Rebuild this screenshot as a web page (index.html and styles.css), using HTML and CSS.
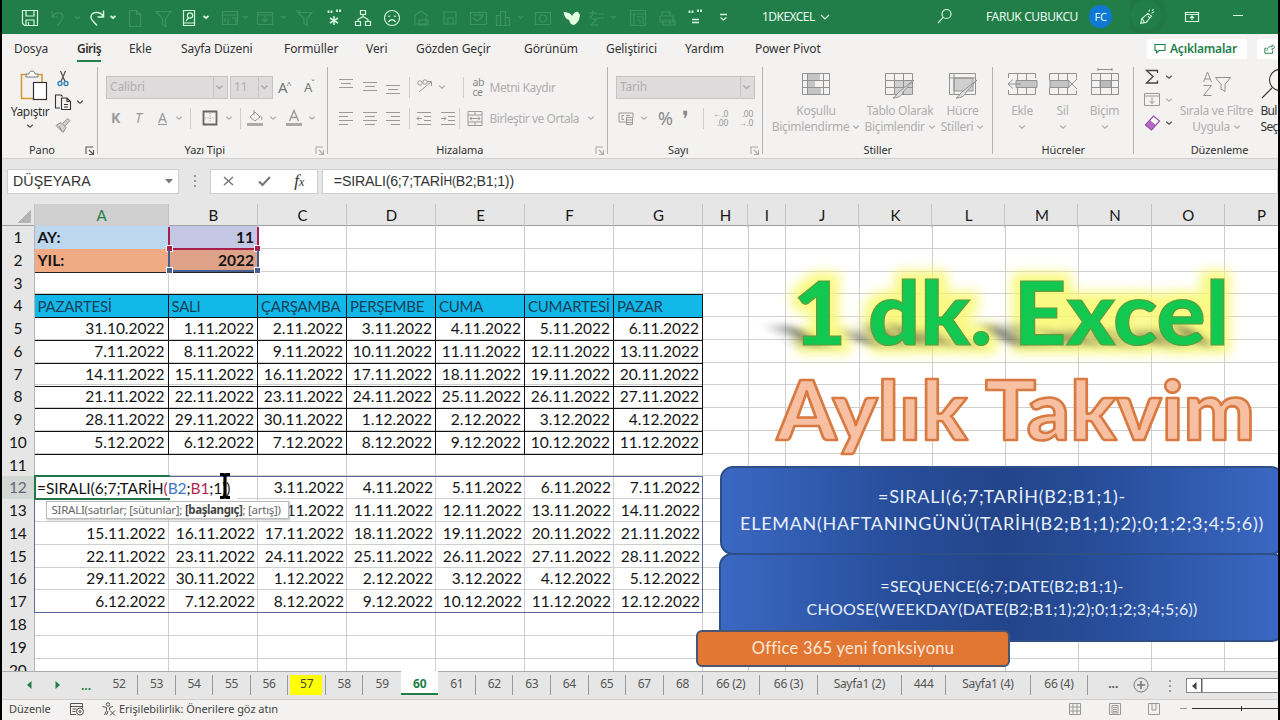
FILE: index.html
```html
<!DOCTYPE html>
<html lang="tr">
<head>
<meta charset="utf-8">
<title>1DKEXCEL</title>
<link rel="stylesheet" href="styles.css">
</head>
<body>
<svg class="defs" width="0" height="0">
  <defs>
    <symbol id="chev" viewBox="0 0 8 8"><path d="M1.2 2.8l2.8 2.4 2.8-2.4" fill="none" stroke="currentColor" stroke-width="1.4"/></symbol>
    <symbol id="launch" viewBox="0 0 10 10"><path d="M1 8V1h7M4 4l4 4M8.500 4v4.500H4" fill="none" stroke="currentColor" stroke-width="1.100"/></symbol>
  </defs>
</svg>
<div class="app">
  <header class="titlebar">
    <div class="qat">
      <svg viewBox="0 0 20 20"><path d="M2.500 2.500h15v15H4.500l-2-2zM6 2.500v5.500h8V2.500M6 17v-5h8v5M8.500 17v-3"/></svg>
      <svg class="dim" viewBox="0 0 20 20"><path d="M4 3v6h6M4 9c4-6 11-5 11 0 0 3-3 5-6 9M27 8.500l2.500 2 2.500-2"/></svg>
      <svg viewBox="0 0 20 20"><path d="M16.500 2.500V9h-6M16.500 9C13 2 3.500 4 4 9.500 4.200 12 7 14 10 17.500" stroke-width="1.500"/><path d="M23.500 8l2.500 2 2.500-2" stroke-width="1.800"/></svg>
      <svg class="dim" viewBox="0 0 20 20"><path d="M4.500 2.500h7l4 4v12h-11zM11.500 2.500v4h4"/></svg>
      <svg class="dim" viewBox="0 0 20 20"><path d="M3 3.500h15l-5.500 7v8l-3-2v-6z"/></svg>
      <svg viewBox="0 0 20 20"><path d="M4.500 2.500h11v15h-11zM4.500 15h11M7 13l2.500-3"/><circle cx="11" cy="7.500" r="2.600"/><path d="M24.500 8l2.500 2 2.500-2" stroke-width="1.800"/></svg>
      <svg class="dim" viewBox="0 0 20 20"><path d="M2.500 3.500h15v13h-15zM2.500 7h15M5 10v4M8 10v6M12 10h4v6M23 8l2.500 2L28 8"/></svg>
      <svg class="dim" viewBox="0 0 20 20"><path d="M2.500 4.500h15v12h-15zM2.500 7h15M10 8v6M7 11l3 3 3-3M26 8l2.500 2L31 8"/></svg>
      <svg class="dim" viewBox="0 0 20 20"><path d="M3 4.500h14l-5 6v7l-3-2v-5zM1 3h5"/></svg>
      <svg viewBox="0 0 20 20"><path d="M10 8v9M6 10l8 5M14 10l-8 5" stroke-width="1.500"/><path d="M4.500 2.500v2.500M7.500 2.500v2.500M13 1.500v2.500M16 1.500v2.500" stroke-width="1.800"/></svg>
      <svg viewBox="0 0 20 20"><path d="M7.500 2.500h5v4h-5zM2.500 13.500h5v4h-5zM12.500 13.500h5v4h-5zM10 6.500v3M5 13v-1.500l5-3 5 3V13"/></svg>
      <svg viewBox="0 0 20 20"><circle cx="10" cy="10" r="7.500"/><path d="M6.500 14c1.500-3 5.500-3 7 0M7 7.500v1.500M13 7.500v1.500" stroke-width="1.500"/></svg>
      <svg class="dim" viewBox="0 0 20 20"><path d="M3 8l7-5 7 5M4 8v8h11V9M8 12h9v5H8z"/></svg>
      <svg class="dim" viewBox="0 0 20 20"><path d="M3 4h14v12h-4M5 4v12h4M9 10h5v6H9z"/></svg>
      <svg class="dim" viewBox="0 0 20 20"><path d="M2.500 4.500h16v12h-16zM5 7h11M5 10l4 3 6-5"/></svg>
      <svg class="dim" viewBox="0 0 20 20"><path d="M3.500 7.500h4v10h-4zM7.500 3.500h5v14h-5zM12.500 9.500h4v8h-4zM25 8l2.500 2L30 8"/></svg>
      <svg class="dim" viewBox="0 0 20 20"><path d="M2.500 4.500h15v12h-15z"/><circle cx="10" cy="10.500" r="3.500"/></svg>
      <svg class="bird" viewBox="0 0 20 20"><path d="M1.500 4c4 0 7 1 8.500 4 1.500-3 4-5 6-4l2 3-1 5c-2 3-4 5-6 5-3-1-3-3-4-5-3-1-5-4-5.500-8z"/></svg>
      <svg class="dim" viewBox="0 0 20 20"><path d="M2 5h8M6 2v3c0 3-2 4-4 5M4 11h6l-6 6h7M11 6h6M11 10h6M24 8l2.500 2L29 8"/></svg>
      <svg class="dim" viewBox="0 0 20 20"><path d="M2.500 2.500h15v15h-15zM2.500 6h15M6 6v11M9 9h6v7M9 12h3v4"/></svg>
      <svg class="dim" viewBox="0 0 20 20"><path d="M5 7V4h8v3M3 8h13v6H3zM6 12h7v5H6zM14 12h4v5h-6"/></svg>
      <svg viewBox="0 0 20 20"><path d="M4.500 2.500v2.500M7.500 2.500v2.500M13 1.500v2.500M16 1.500v2.500" stroke-width="1.800"/><path d="M7 11.500h7M7 14.500h7" stroke-width="1.300"/></svg>
      <svg viewBox="0 0 20 20"><path d="M7 6.500h7M7.500 9.500l3 2.500 3-2.500" stroke-width="1.300"/></svg>
    </div>
    <div class="doc">1DKEXCEL <svg viewBox="0 0 10 8"><path d="M1 2l4 4 4-4"/></svg></div>
    <svg class="find" viewBox="0 0 16 18"><circle cx="9.500" cy="6" r="4.500"/><path d="M6.200 9.300L1 15"/></svg>
    <div class="user">FARUK CUBUKCU</div>
    <div class="avatar">FC</div>
    <div class="pen-wrap"><svg class="pen" viewBox="0 0 20 20"><path d="M3 17l1-5 7-6 4 3-6 7zM5 12l2 4M12 4l1-2M15 6l3-2M11 9l2 2M16 3l1-2"/></svg></div>
    <svg class="ribbon-toggle" viewBox="0 0 14 12"><path d="M.5 1.500h13v9H.5zM.5 3.500h13M7 9V5.500M5 7l2-2 2 2"/></svg>
    <div class="minimise"></div>
  </header>

  <nav class="menu">
    <span>Dosya</span><span class="on">Giriş</span><span>Ekle</span><span>Sayfa Düzeni</span><span>Formüller</span><span>Veri</span><span>Gözden Geçir</span><span>Görünüm</span><span>Geliştirici</span><span>Yardım</span><span>Power Pivot</span>
    <div class="comments"><svg viewBox="0 0 12 12"><path d="M1 1.500h10v6H5L2.500 10V7.500H1z"/></svg>Açıklamalar</div>
    <div class="share"><svg viewBox="0 0 14 12"><path d="M3 5H1v6h9V8M3.500 8c0-4 3-5 6-5V1l3 3-3 3V5"/></svg></div>
  </nav>

  <section class="ribbon">
    <div class="group g-clip">
      <div class="tools">
        <div class="paste">
          <svg class="ic-paste" viewBox="0 0 28 31"><path d="M6 4.500H1.500v24H13" stroke="#d79a32" stroke-width="1.600" fill="none"/><path d="M18 4.500h4V12" stroke="#d79a32" stroke-width="1.600" fill="none"/><path d="M6 7V4h3c0-4 6-4 6 0h3v3z" fill="#fff" stroke="#777"/><rect x="13.500" y="12.500" width="13" height="17" fill="#fff" stroke="#333" stroke-width="1.200"/></svg>
          <span>Yapıştır</span>
          <svg class="chev"><use href="#chev"/></svg>
        </div>
        <div class="clip-col">
          <svg class="ic" viewBox="0 0 16 18"><path d="M5.500 1l4.500 10.500M10.500 1L6 11.500" stroke="#555" stroke-width="1.300" fill="none"/><circle cx="5" cy="13.500" r="2" fill="none" stroke="#3a84b4" stroke-width="1.400"/><circle cx="11" cy="13.500" r="2" fill="none" stroke="#3a84b4" stroke-width="1.400"/></svg>
          <div class="row"><svg class="ic" viewBox="0 0 16 18"><path d="M5 15H.5V2H6l1.500 1.500M6.500 5h5.500l3.500 3.500v8h-9zM12 5v3.500h3.500M9 11.500h4M9 14h4" fill="none" stroke="#333" stroke-width="1.100"/></svg><svg class="chev"><use href="#chev"/></svg></div>
          <svg class="ic" viewBox="0 0 16 18"><path d="M1 9.500l5-3 5 5-3 5zM7.500 7.500L13 2.500l2 2-5 5.500M4 10l3 5" fill="#d4d2d0" stroke="#8f8f8f"/></svg>
        </div>
      </div>
      <div class="glabel"><span>Pano</span><svg><use href="#launch"/></svg></div>
    </div>

    <div class="group g-font off">
      <div class="tools stack">
        <div class="strip font1">
          <div class="combo">Calibri<svg class="chev"><use href="#chev"/></svg></div>
          <div class="combo">11<svg class="chev"><use href="#chev"/></svg></div>
          <span class="big">A<sup>^</sup></span><span class="big small">A<sup>ˇ</sup></span>
        </div>
        <div class="strip font2">
          <b class="ltr">K</b><i class="ltr">T</i><u class="ltr">A</u><svg class="chev"><use href="#chev"/></svg>
          <span class="sep"></span>
          <svg class="ic20" viewBox="0 0 20 20"><path d="M3.500 3.500h13v13h-13z" stroke="#666" stroke-width="1.800"/><path d="M10 5v10M5 10h10" stroke-dasharray="1 1.500"/></svg><svg class="chev"><use href="#chev"/></svg>
          <span class="sep"></span>
          <svg class="ic20" viewBox="0 0 20 20"><path d="M5 9l5-5 5 5-5 4zM9 2v5M15 8c3 1 2 4 1 4"/><path d="M2 16.500h16" stroke="#aaa" stroke-width="3"/></svg><svg class="chev"><use href="#chev"/></svg>
          <svg class="ic20" viewBox="0 0 20 20"><path d="M5.500 13L10 2.500 14.500 13M7 9.500h6" stroke-width="1.400"/><path d="M2 16.500h16" stroke="#aaa" stroke-width="3"/></svg><svg class="chev"><use href="#chev"/></svg>
        </div>
      </div>
      <div class="glabel"><span>Yazı Tipi</span><svg><use href="#launch"/></svg></div>
    </div>

    <div class="group g-align off">
      <div class="tools stack">
        <div class="strip al1">
          <svg class="ic20" viewBox="0 0 20 20"><path d="M3 2.500h14M5 6.500h10M3 10.500h14"/></svg>
          <svg class="ic20" viewBox="0 0 20 20"><path d="M3 5.500h14M5 9.500h10M3 13.500h14"/></svg>
          <svg class="ic20" viewBox="0 0 20 20"><path d="M3 8.500h14M5 12.500h10M3 16.500h14"/></svg>
          <span class="sep"></span>
          <svg class="ic20" viewBox="0 0 20 20"><path d="M3 15L15 5M11 4.500h4.500V9"/><circle cx="4" cy="6" r="2.200"/><circle cx="9" cy="5" r="2.200"/></svg><svg class="chev"><use href="#chev"/></svg>
          <span class="sep"></span>
          <span class="abc">ab<br>ce</span>
          <span class="lbl">Metni Kaydır</span>
        </div>
        <div class="strip al2">
          <svg class="ic20" viewBox="0 0 20 20"><path d="M3 4.500h14M3 8.500h9M3 12.500h14M3 16.500h9"/></svg>
          <svg class="ic20" viewBox="0 0 20 20"><path d="M3 4.500h14M5 8.500h10M3 12.500h14M5 16.500h10"/></svg>
          <svg class="ic20" viewBox="0 0 20 20"><path d="M3 4.500h14M8 8.500h9M3 12.500h14M8 16.500h9"/></svg>
          <span class="sep"></span>
          <svg class="ic20" viewBox="0 0 20 20"><path d="M3 4.500h14M10 8.500h7M10 12.500h7M3 16.500h14M8 10.500H3M5 8.500l-2 2 2 2"/></svg>
          <svg class="ic20" viewBox="0 0 20 20"><path d="M3 4.500h14M10 8.500h7M10 12.500h7M3 16.500h14M3 10.500h5M6 8.500l2 2-2 2"/></svg>
          <span class="sep"></span>
          <svg class="ic20" viewBox="0 0 20 20"><path d="M2 3.500h14v14H2zM2 7h14M2 14h14M9 3.500V7M9 14v3.500M4 10.500h10M6 8.500l-2 2 2 2M12 8.500l2 2-2 2"/></svg>
          <span class="lbl">Birleştir ve Ortala</span><svg class="chev"><use href="#chev"/></svg>
        </div>
      </div>
      <div class="glabel"><span>Hizalama</span><svg><use href="#launch"/></svg></div>
    </div>

    <div class="group g-num off">
      <div class="tools stack">
        <div class="strip num1"><div class="combo">Tarih<svg class="chev"><use href="#chev"/></svg></div></div>
        <div class="strip num2">
          <svg class="ic20" viewBox="0 0 20 20"><path d="M2 5h14v4M2 5v9h7M7 7.500H5v4h2M9 7.500h4M9.500 9.500h6v7h-6zM9.500 12h6M9.500 14.500h6"/></svg><svg class="chev"><use href="#chev"/></svg>
          <span class="pct">%</span><span class="comma">❜</span><span class="sep"></span>
          <span class="dec">←.0<br>.00</span><span class="dec">.00<br>→.0</span>
        </div>
      </div>
      <div class="glabel"><span>Sayı</span><svg><use href="#launch"/></svg></div>
    </div>

    <div class="group g-style off">
      <div class="tools bigs">
        <div class="bigbtn w1"><svg viewBox="0 0 30 28"><path d="M6 3.500h13v7H6zM6 10.500h8v7H6zM6 17.500h14v7H6z" fill="#c4c4c4" stroke="none"/><path d="M1.500 3.500h27v21h-27zM1.500 10.500h27M1.500 17.500h27M6.500 3.500v21M22.500 3.500v21"/></svg><span>Koşullu</span><span>Biçimlendirme <svg class="chev"><use href="#chev"/></svg></span></div>
        <div class="bigbtn w2"><svg viewBox="0 0 30 28"><path d="M10 10h17v14H10z" fill="#cfcfcf" stroke="none"/><path d="M.5 3.500h27v21H.5zM.5 10.500h27M.5 17.500h27M9.500 3.500v21M18.500 3.500v21"/><path d="M29 10L18 22c-1 4-5 6-10 6 3-1 4-5 7-7z" fill="#ddd"/></svg><span>Tablo Olarak</span><span>Biçimlendir <svg class="chev"><use href="#chev"/></svg></span></div>
        <div class="bigbtn w3"><svg viewBox="0 0 30 28"><path d="M6 8h19v13H6z" fill="#cfcfcf"/><path d="M1.500 3.500h26v21h-26zM1.500 8h26M6 3.500v21"/><path d="M29 10L18 22c-1 4-5 6-10 6 3-1 4-5 7-7z" fill="#ddd"/></svg><span>Hücre</span><span>Stilleri <svg class="chev"><use href="#chev"/></svg></span></div>
      </div>
      <div class="glabel"><span>Stiller</span></div>
    </div>

    <div class="group g-cells off">
      <div class="tools bigs">
        <div class="bigbtn w4"><svg viewBox="0 0 30 28"><path d="M9 10.500h21v7H9z" fill="#c4c4c4"/><path d="M1.500 8V3.500h27V8M1.500 20v4.500h27V18M10.500 3.500v7M19.500 3.500v7M10.500 17.500v7M19.500 17.500v7M14 14H1M6 9.500L1 14l5 4.500"/></svg><span>Ekle</span><svg class="chev"><use href="#chev"/></svg></div>
        <div class="bigbtn w5"><svg viewBox="0 0 30 28"><path d="M2 10.500h19v7H2z" fill="#c4c4c4"/><path d="M1.500 10.500v-7h27v5M1.500 17.500v7h27v-4M10.500 3.500v7M19.500 3.500v7M10.500 17.500v7M19.500 17.500v7M19 9l10 10M29 9L19 19"/></svg><span>Sil</span><svg class="chev"><use href="#chev"/></svg></div>
        <div class="bigbtn w6"><svg viewBox="0 0 30 28"><path d="M10 10.500h11v7H10z" fill="#bbb"/><path d="M1.500 3.500h27v21h-27zM1.500 10.500h27M1.500 17.500h27M10.500 3.500v21M21.500 3.500v21M8 -.5h14M8 -2v3M22 -2v3"/></svg><span>Biçim</span><svg class="chev"><use href="#chev"/></svg></div>
      </div>
      <div class="glabel"><span>Hücreler</span></div>
    </div>

    <div class="group g-edit">
      <div class="tools">
        <div class="edit-col">
          <div class="row"><svg class="ic" viewBox="0 0 16 18"><path d="M13.500 5V2.500h-11L9 8.500l-6.500 6.500h11V12.500" fill="none" stroke="#444" stroke-width="1.300"/></svg><svg class="chev"><use href="#chev"/></svg></div>
          <div class="row off"><svg class="ic" viewBox="0 0 16 18"><path d="M.5 2.500h15v12H.5zM.5 5h15M8 6.500v6M5.500 10L8 12.500 10.500 10"/></svg><svg class="chev"><use href="#chev"/></svg></div>
          <div class="row"><svg class="ic" viewBox="0 0 16 18"><path d="M1.500 11l8-9 6 5-8 9z" fill="#fff" stroke="#9a4fae" stroke-width="1.200"/><path d="M1.500 11l4-4.500 6 5-4 4.500z" fill="#b36bc5" stroke="#9a4fae"/></svg><svg class="chev"><use href="#chev"/></svg></div>
        </div>
        <div class="bigbtn w7 off"><svg viewBox="0 0 30 28"><path d="M1.500 12L5.500 2l4 10M3 9h5M1.500 15.500h8l-8 10h8M13.500 7.500h15l-5.500 7v7l-4-2.500v-4.500z"/></svg><span>Sırala ve Filtre</span><span>Uygula <svg class="chev"><use href="#chev"/></svg></span></div>
        <div class="bigbtn w8"><svg viewBox="0 0 30 28"><circle cx="19" cy="10" r="10.500"/><path d="M11 18L1 28"/></svg><span>Bul</span><span>Seç</span></div>
      </div>
      <div class="glabel"><span>Düzenleme</span></div>
    </div>
  </section>

  <section class="formula">
    <div class="namebox">DÜŞEYARA<svg viewBox="0 0 8 5"><path d="M0 0h8L4 4.500z" fill="#777"/></svg></div>
    <div class="dots"><i></i><i></i><i></i></div>
    <div class="fbtns">
      <svg viewBox="0 0 14 14"><path d="M2 3l9 8M11 3l-9 8" stroke-width="1.500"/></svg>
      <svg viewBox="0 0 14 14"><path d="M1 7.500l3.500 3.500L12 3" stroke-width="2.200"/></svg>
      <span>f<small>x</small></span>
    </div>
    <div class="fbox">=SIRALI(6;7;TARİ<small>H(</small>B2;B1;1))</div>
  </section>

  <main class="sheet">
    <div class="r head"><span class="corner"></span><span class="sel">A</span><span>B</span><span>C</span><span>D</span><span>E</span><span>F</span><span>G</span><span>H</span><span>I</span><span>J</span><span>K</span><span>L</span><span>M</span><span>N</span><span>O</span><span>P</span></div>
    <div class="grid">
      <div class="r"><em>1</em><b class="ay">AY:</b><b class="v1">11</b></div>
      <div class="r"><em>2</em><b class="yil">YIL:</b><b class="v2">2022</b></div>
      <div class="r"><em>3</em></div>
      <div class="r days"><em>4</em><span>PAZARTESİ</span><span>SALI</span><span>ÇARŞAMBA</span><span>PERŞEMBE</span><span>CUMA</span><span>CUMARTESİ</span><span>PAZAR</span></div>
      <div class="r cal"><em>5</em><span>31.10.2022</span><span>1.11.2022</span><span>2.11.2022</span><span>3.11.2022</span><span>4.11.2022</span><span>5.11.2022</span><span>6.11.2022</span></div>
      <div class="r cal"><em>6</em><span>7.11.2022</span><span>8.11.2022</span><span>9.11.2022</span><span>10.11.2022</span><span>11.11.2022</span><span>12.11.2022</span><span>13.11.2022</span></div>
      <div class="r cal"><em>7</em><span>14.11.2022</span><span>15.11.2022</span><span>16.11.2022</span><span>17.11.2022</span><span>18.11.2022</span><span>19.11.2022</span><span>20.11.2022</span></div>
      <div class="r cal"><em>8</em><span>21.11.2022</span><span>22.11.2022</span><span>23.11.2022</span><span>24.11.2022</span><span>25.11.2022</span><span>26.11.2022</span><span>27.11.2022</span></div>
      <div class="r cal"><em>9</em><span>28.11.2022</span><span>29.11.2022</span><span>30.11.2022</span><span>1.12.2022</span><span>2.12.2022</span><span>3.12.2022</span><span>4.12.2022</span></div>
      <div class="r cal"><em>10</em><span>5.12.2022</span><span>6.12.2022</span><span>7.12.2022</span><span>8.12.2022</span><span>9.12.2022</span><span>10.12.2022</span><span>11.12.2022</span></div>
      <div class="r"><em>11</em></div>
      <div class="r"><em class="cur">12</em><span></span><span></span><span>3.11.2022</span><span>4.11.2022</span><span>5.11.2022</span><span>6.11.2022</span><span>7.11.2022</span></div>
      <div class="r"><em>13</em><span></span><span></span><span>10.11.2022</span><span>11.11.2022</span><span>12.11.2022</span><span>13.11.2022</span><span>14.11.2022</span></div>
      <div class="r"><em>14</em><span>15.11.2022</span><span>16.11.2022</span><span>17.11.2022</span><span>18.11.2022</span><span>19.11.2022</span><span>20.11.2022</span><span>21.11.2022</span></div>
      <div class="r"><em>15</em><span>22.11.2022</span><span>23.11.2022</span><span>24.11.2022</span><span>25.11.2022</span><span>26.11.2022</span><span>27.11.2022</span><span>28.11.2022</span></div>
      <div class="r"><em>16</em><span>29.11.2022</span><span>30.11.2022</span><span>1.12.2022</span><span>2.12.2022</span><span>3.12.2022</span><span>4.12.2022</span><span>5.12.2022</span></div>
      <div class="r"><em>17</em><span>6.12.2022</span><span>7.12.2022</span><span>8.12.2022</span><span>9.12.2022</span><span>10.12.2022</span><span>11.12.2022</span><span>12.12.2022</span></div>
      <div class="r"><em>18</em></div>
      <div class="r"><em>19</em></div>
      <div class="r"><em>20</em></div>
    </div>

    <div class="ref red"><i></i><i></i></div>
    <div class="ref blue"><i></i><i></i></div>
    <div class="spill"></div>
    <div class="edittext">=SIRALI(6;7;TARİH<span class="pr">(</span><span class="pb">B2</span>;<span class="pr">B1</span>;1))</div>
    <div class="editcell"></div>
    <div class="hint">SIRALI(satırlar; [sütunlar]; <b>[başlangıç]</b>; [artış])</div>
    <svg class="ibeam" viewBox="0 0 12 28"><path d="M1 2.500h3.500L6 4l1.500-1.500H11M6 4v20M1 25.500h3.500L6 24l1.500 1.500H11" fill="none" stroke="#000" stroke-width="3.200"/></svg>

    <svg class="art" viewBox="0 0 520 190">
      <defs>
        <filter id="glow" x="-10%" y="-30%" width="120%" height="160%"><feMorphology operator="dilate" radius="8"/><feGaussianBlur stdDeviation="6"/></filter>
        <filter id="shade" x="-10%" y="-60%" width="120%" height="220%"><feGaussianBlur stdDeviation="7 14"/></filter>
      </defs>
      <text class="w-one glow" x="35" y="80" textLength="432" lengthAdjust="spacingAndGlyphs" filter="url(#glow)" aria-hidden="true">1 dk. Excel</text>
      <text class="w-one shade" x="35" y="84" textLength="432" lengthAdjust="spacingAndGlyphs" transform="translate(-42 55) skewX(50) scale(1 .3)" filter="url(#shade)" aria-hidden="true">1 dk. Excel</text>
      <text class="w-one" x="33" y="80" textLength="436" lengthAdjust="spacingAndGlyphs">1 dk. Excel</text>
      <text class="w-two" x="17" y="175" textLength="478" lengthAdjust="spacingAndGlyphs">Aylık Takvim</text>
    </svg>
    <div class="callout c1"><span>=SIRALI(6;7;TARİH(B2;B1;1)-</span><span>ELEMAN(HAFTANINGÜNÜ(TARİH(B2;B1;1);2);0;1;2;3;4;5;6))</span></div>
    <div class="callout c2"><span>=SEQUENCE(6;7;DATE(B2;B1;1)-</span><span>CHOOSE(WEEKDAY(DATE(B2;B1;1);2);0;1;2;3;4;5;6))</span></div>
    <div class="callout c3"><span>Office 365 yeni fonksiyonu</span></div>
  </main>

  <footer class="tabs">
    <div class="nav"><svg viewBox="0 0 5 8"><path d="M4.500 0v8L0 4z"/></svg><svg viewBox="0 0 5 8"><path d="M.5 0v8L5 4z"/></svg><b>...</b></div>
    <span>52</span><span>53</span><span>54</span><span>55</span><span>56</span><span class="yel">57</span><span>58</span><span class="last">59</span><span class="act">60</span><span>61</span><span>62</span><span>63</span><span>64</span><span>65</span><span>67</span><span class="t68">68</span><span class="t2">66 (2)</span><span class="t2">66 (3)</span><span class="t3">Sayfa1 (2)</span><span class="t4">444</span><span class="t3">Sayfa1 (4)</span><span class="t2">66 (4)</span>
    <b class="more">...</b>
    <svg class="plus" viewBox="0 0 16 16"><circle cx="8" cy="8" r="7"/><path d="M8 4v8M4 8h8" stroke-width="1.600"/></svg>
    <div class="dots tdots"><i></i><i></i><i></i></div>
    <div class="scroll"><svg viewBox="0 0 5 8"><path d="M4.500 0v8L0 4z"/></svg></div>
  </footer>
  <footer class="status">
    <span class="mode">Düzenle</span>
    <svg class="macro" viewBox="0 0 16 14"><path d="M7 12.500H1.500v-11h12V6M1.500 4.500h12M3.500 7h4M3.500 9.500h3"/><circle cx="11" cy="9.500" r="3.500"/><circle cx="11" cy="9.500" r="1"/></svg>
    <svg class="acc" viewBox="0 0 16 14"><circle cx="7" cy="2.500" r="1.700"/><path d="M1.500 4.500l4 1v3L3.500 13M12 4.500l-3.500 1V8M5.500 13L7 9M9 8.500l5 5M14 8.500l-5 5"/></svg>
    <span class="access">Erişilebilirlik: Önerilere göz atın</span>
    <div class="views">
      <svg viewBox="0 0 12 12"><path d="M.5.500h11v11H.5zM.5 4h11M.5 8h11M4 .5v11M8 .5v11"/></svg>
      <svg viewBox="0 0 12 12"><path d="M.5.500h11v11H.5zM3 2.500h6v7.500H3zM4 4.500h4M4 6.500h4M4 8.500h4"/></svg>
      <svg viewBox="0 0 12 12"><path d="M.5.500h11v11H.5zM4 .5V7h4V.5"/></svg>
      <span class="minus"></span><span class="zoomline"><i></i></span>
    </div>
  </footer>
</div>
</body>
</html>
```
FILE: styles.css
```css
* { box-sizing: border-box; }
body { margin: 0; background: #000; width: 1280px; height: 720px; overflow: hidden; font-family: "Noto Sans", "Open Sans", sans-serif; font-size: 12px; color: #333; }
.defs { position: absolute; }
.app { width: 1276px; height: 720px; margin-left: 2px; overflow: hidden; display: flex; flex-direction: column; background: #f3f2f1; }
svg { overflow: visible; flex: none; }
.row { display: flex; align-items: center; }

.titlebar { height: 33.500px; flex: none; background: #227e48; display: flex; align-items: center; color: #e9fbef; position: relative; }
.titlebar svg { fill: none; stroke: #d4f7df; stroke-width: 1.200; }
.qat { display: grid; margin-left: 18px; width: 740px; grid-template-columns: 28px 39px 38px 28px 26px 41px 35px 40px 29px 29px 29px 29px 28px 29px 25px 40px 29px 25px 41px 29px 28px 28px 30px; }
.qat svg { width: 20px; height: 20px; margin-top: 2px; }
.titlebar .dim { stroke: #3d9360; }
.titlebar .bird path { fill: #e2ffe6; stroke: none; }
.doc { margin-left: 2px; width: 175px; letter-spacing: -.55px; }
.doc svg { width: 10px; height: 8px; margin-left: 3px; }
.find { width: 16px; height: 18px; }
.user { margin-left: 33px; width: 93px; letter-spacing: -.38px; font-size: 12px; white-space: nowrap; }
.avatar { margin-left: 10px; width: 23px; height: 23px; border-radius: 50%; background: #0f78d4; text-align: center; line-height: 23px; font-size: 11px; letter-spacing: -.3px; }
.pen-wrap { margin-left: 18px; width: 58px; height: 33px; display: flex; align-items: center; padding-left: 8px; background: radial-gradient(circle at 16px 15px, transparent 14px, #207744 16px 20px, transparent 22px); }
.pen { width: 18px; height: 18px; }
.ribbon-toggle { width: 14px; height: 12px; margin-left: -3px; }
.minimise { width: 10px; height: 1px; background: #d4f7df; margin-left: 34px; margin-top: -2px; }

.menu { height: 28.500px; flex: none; display: grid; grid-template-columns: 63px 52px 52px 103px 82px 50px 108px 82px 79px 70px 394px 72px 60px; padding: 2px 0 0 12px; align-items: center; line-height: 16px; font-size: 12px; letter-spacing: -.08px; white-space: nowrap; }
.menu .on { font-weight: 600; justify-self: start; border-bottom: 2.500px solid #227e48; padding-bottom: 3px; margin-top: 5px; letter-spacing: -.5px; }
.menu svg { fill: none; stroke: #227e48; stroke-width: 1.100; width: 12px; height: 12px; }
.comments, .share { background: #fff; height: 20px; display: flex; align-items: center; color: #227e48; font-weight: 600; border-radius: 2px; }
.comments { width: 100px; margin-left: -2px; gap: 4px; padding-left: 7px; letter-spacing: -.2px; }
.share { margin-left: 36px; padding-left: 7px; }

.ribbon { height: 96.500px; flex: none; display: flex; border-bottom: 1px solid #d2d0ce; }
.group { display: flex; flex-direction: column; position: relative; flex: none; }
.group:not(:last-child)::after { content: ""; position: absolute; right: 0; top: 5px; height: 87px; width: 1px; background: #b5b3b1; }
.tools { height: 80px; display: flex; }
.stack { flex-direction: column; padding-top: 10px; gap: 1px; }
.glabel { height: 16px; line-height: 15px; display: flex; font-size: 11px; letter-spacing: -.1px; justify-content: center; position: relative; }
.glabel svg { position: absolute; right: 3px; top: 4px; width: 10px; height: 10px; color: #555; }
.off .glabel svg { color: #aaa; }
.g-clip { width: 96px; }
.g-font { width: 229.500px; }
.g-align { width: 280.500px; }
.g-num { width: 154.500px; }
.g-style { width: 230.500px; }
.g-cells { width: 140.500px; }
.g-edit { width: 172px; }
.g-clip .glabel, .g-font .glabel, .g-align .glabel { padding-right: 16px; }
.g-num .glabel { padding-right: 14px; }
.chev { width: 8px; height: 8px; color: #555; }
.off .chev { color: #b0b0b0; }
.paste { width: 46px; margin-left: 5px; padding-top: 8px; display: flex; flex-direction: column; align-items: center; letter-spacing: -.35px; margin-right: 2px; }
.ic-paste { width: 28px; height: 31px; margin-left: 7px; }
.paste span { line-height: 21px; }
.clip-col { display: flex; flex-direction: column; padding-top: 8px; gap: 5px; }
.ic { width: 16px; height: 18px; }
.clip-col .chev { margin-left: 5px; }
.strip { display: grid; height: 30px; align-items: center; }
.ic20 { width: 20px; height: 20px; }
.off .ic20, .off .ic { fill: none; stroke: #9a9a9a; stroke-width: 1; }
.sep { width: 1px; height: 21px; background: #d0cecd; }
.combo { height: 23px; background: #dddbdc; border: 1px solid #c5c3c4; color: #b0aeaf; display: flex; align-items: center; justify-content: space-between; padding: 0 2px 0 3px; line-height: 20px; letter-spacing: -.2px; }
.combo .chev { border-left: 1px solid #c5c3c4; height: 20px; width: 12px; padding: 0 1px; }
.font1 { grid-template-columns: 122px 43px 24px 20px; padding-left: 8px; column-gap: 2px; }
.big { font-size: 15px; color: #777; line-height: 20px; padding-left: 3px; }
.big sup { font-size: 9px; vertical-align: 5px; line-height: 0; margin-left: -1px; }
.small { font-size: 13px; }
.ltr { color: #9a9a9a; font-size: 14px; margin-top: -2px; }
.font2 { grid-template-columns: 24px 23px 17px 15px 10px 25px 15px 5px 24px 15px 24px 10px; padding-left: 13px; }
.al1 { grid-template-columns: 24px 23px 26px 7px 22px 25px 10px 17px 80px; padding-left: 8px; }
.al2 { grid-template-columns: 24px 23px 26px 5px 24px 21px 7px 24px 97px 10px; padding-left: 8px; }
.abc { font-size: 10.500px; line-height: 10px; color: #888; letter-spacing: -.5px; }
.lbl { color: #b0aeaf; letter-spacing: -.45px; white-space: nowrap; }
.num1 .combo { margin-left: 8px; width: 139px; }
.num2 { grid-template-columns: 23px 18px 23px 22px 7px 25px 20px; padding-left: 9px; }
.pct { font-size: 18px; color: #888; line-height: 20px; }
.comma { font-size: 21px; color: #888; line-height: 20px; padding-left: 1px; }
.dec { font-size: 8.500px; line-height: 9px; color: #999; text-align: right; width: 18px; letter-spacing: -.3px; white-space: nowrap; }
.bigbtn { display: flex; flex-direction: column; align-items: center; padding-top: 8px; line-height: 16px; white-space: nowrap; letter-spacing: -.3px; }
.bigbtn > svg:first-child { width: 30px; height: 28px; margin-bottom: 5px; fill: none; stroke: #333; stroke-width: 1.100; }
.off .bigbtn > svg:first-child, .bigbtn.off > svg:first-child { stroke: #929292; stroke-width: 1; }
.bigbtn > .chev { margin-top: 4px; }
.off .bigbtn, .bigbtn.off { color: #b0aeaf; }
.w1 { width: 93px; margin-left: 7px; }
.w2 { width: 75px; }
.w3 { width: 50px; }
.w4 { width: 40px; margin-left: 9px; }
.w5 { width: 41px; }
.w6 { width: 43px; }
.edit-col { width: 43px; padding: 6px 0 0 10px; display: flex; flex-direction: column; gap: 5px; }
.edit-col .chev { margin-left: 5px; }
.w7 { width: 80px; }
.w8 { width: 30px; align-items: flex-start; padding-left: 4px; letter-spacing: -.7px; }

.formula { height: 45px; flex: none; background: #e6e6e6; display: flex; align-items: center; font-family: "Liberation Sans", Arial, sans-serif; font-size: 14.200px; padding-left: 5px; }
.namebox, .fbtns, .fbox { height: 25px; background: #fff; border: 1px solid #cfcfcf; display: flex; align-items: center; }
.namebox { width: 173px; justify-content: space-between; padding: 0 5px; letter-spacing: .1px; }
.namebox svg { width: 8px; height: 5px; }
.dots { width: 31px; display: flex; flex-direction: column; align-items: center; gap: 3px; }
.dots i { width: 1.500px; height: 2px; background: #999; }
.fbtns { width: 108px; padding-left: 11px; gap: 22px; }
.fbtns svg { width: 14px; height: 14px; fill: none; stroke: #777; }
.fbtns span { font: italic 17px "Liberation Serif", serif; }
.fbtns small { font-size: 12px; }
.fbox { margin-left: 4px; width: 960px; padding-left: 11px; letter-spacing: -.2px; }
.fbox small { font-size: 12px; }

.sheet { height: 467.500px; flex: none; position: relative; overflow: hidden; font-family: Lato, "Noto Sans", sans-serif; font-size: 15.500px; color: #151515; }
.r { display: grid; grid-template-columns: 32.500px 134px 89.500px 89px 89px 89px 89px 89px 45px 37.700px 73.200px 73.200px 73.200px 73.200px 73.200px 73.200px 73.200px; height: 22.770px; line-height: 23px; }
.head { height: 22.500px; background: #e6e6e6; border-bottom: 1px solid #9f9f9f; text-align: center; line-height: 22px; }
.head span { border-right: 1px solid #c4c4c4; font-size: 15px; padding-left: 1px; }
.head .sel { background: #d0d0d0; color: #227e48; border-bottom: 2px solid #227e48; }
.corner { background: linear-gradient(135deg, transparent 50%, #b4b4b4 50%) no-repeat 16px 6px / 13px 13px; }
.grid { height: 445px; overflow: hidden; background:
  linear-gradient(90deg, transparent 166px, #cfcfcf 166px 167px, transparent 167px 255px, #cfcfcf 255px 256px, transparent 256px 344px, #cfcfcf 344px 345px, transparent 345px 433px, #cfcfcf 433px 434px, transparent 434px 522px, #cfcfcf 522px 523px, transparent 523px 611px, #cfcfcf 611px 612px, transparent 612px 700px, #cfcfcf 700px 701px, transparent 701px 746px, #cfcfcf 746px 747px, transparent 747px 783px, #cfcfcf 783px 784px, transparent 784px 857px, #cfcfcf 857px 858px, transparent 858px 930px, #cfcfcf 930px 931px, transparent 931px 1003px, #cfcfcf 1003px 1004px, transparent 1004px 1076px, #cfcfcf 1076px 1077px, transparent 1077px 1149px, #cfcfcf 1149px 1150px, transparent 1150px 1222px, #cfcfcf 1222px 1223px, transparent 1223px),
  repeating-linear-gradient(#fff 0 21.770px, #cfcfcf 21.770px 22.770px); }
.grid em { font-style: normal; text-align: center; background: #e6e6e6; border-right: 1px solid #b5b5b5; border-bottom: 1px solid #cdcdcd; letter-spacing: -.3px; }
.grid .cur { color: #667; background: #d4d8d5; }
.grid .r > span { text-align: right; padding-right: 3px; white-space: nowrap; }
.grid b { border-bottom: 1px solid #222; padding: 0 4px 0 3px; }
.grid .ay { background: #bdd7ee; }
.grid .yil { background: #f0ab84; }
.grid .v1 { background: #c4c7e3; text-align: right; }
.grid .v2 { background: #dda288; text-align: right; }
.days > span, .cal > span { border-right: 1px solid #111; border-bottom: 1px solid #111; }
.grid .days > span { background: #11b8e8; color: #173f58; text-align: left; padding-left: 3px; padding-right: 0; border-top: 1px solid #111; line-height: 22px; font-size: 15px; letter-spacing: -.25px; }
.ref { position: absolute; left: 165.500px; width: 91px; border: 2px solid; border-top: 0; }
.ref.red { top: 23px; height: 23px; color: #a8204a; }
.ref.blue { top: 46px; height: 22.500px; color: #465f91; }
.ref i { position: absolute; width: 7px; height: 7px; background: currentColor; border: 1px solid #fff; bottom: -4px; }
.ref i:first-child { left: -4px; }
.ref i:last-child { right: -4px; }
.spill { position: absolute; left: 32px; top: 272px; width: 669px; height: 137px; border: 1px solid #5b6898; }
.edittext { position: absolute; left: 33px; top: 273px; width: 202px; height: 22px; padding-left: 2px; line-height: 23px; background: #fff; letter-spacing: -.09px; white-space: nowrap; }
.pr { color: #b02a50; }
.pb { color: #3d74c4; }
.editcell { position: absolute; left: 32px; top: 271px; width: 136px; height: 25px; border: 2px solid #22764a; border-right: 0; }
.hint { position: absolute; left: 43.500px; top: 297px; width: 243px; height: 18px; background: #fff; border: 1px solid #bbb; box-shadow: 1px 1px 2px #bbb; font: 11.500px/16px "Noto Sans", sans-serif; letter-spacing: -.26px; padding-left: 5px; color: #666; white-space: nowrap; }
.hint b { color: #444; letter-spacing: -.4px; }
.ibeam { position: absolute; left: 217px; top: 268px; width: 12px; height: 28px; }
.art { position: absolute; left: 758px; top: 61px; width: 520px; height: 190px; font-family: Lato, sans-serif; font-weight: 900; }
.w-one { font-size: 87px; fill: #12c850; stroke: #5f9c40; stroke-width: 1.200; }
.w-one.glow { fill: #f8f86e; stroke: #f8f86e; opacity: .85; }
.w-one.shade { fill: #333; stroke: none; opacity: .65; }
.w-two { font-size: 82px; fill: #f8c0a2; stroke: #d87a42; stroke-width: 2.600; stroke-linejoin: round; }
.callout { position: absolute; display: flex; flex-direction: column; align-items: center; justify-content: center; color: #e6eefb; border: 2px solid #2c4f86; border-radius: 13px; background: linear-gradient(90deg, #3b68c3, #284f9c 30%, #23448a 50%, #284f9c 70%, #3b68c3); white-space: nowrap; }
.c1 { left: 718px; top: 262px; width: 564px; height: 89px; font-size: 18px; line-height: 27px; letter-spacing: .7px; }
.c2 { left: 717px; top: 349px; width: 566px; height: 89px; font-size: 16px; line-height: 23px; letter-spacing: .27px; }
.c3 { left: 694px; top: 426px; width: 314px; height: 37.500px; background: #e27633; border-radius: 6px; font-size: 16.500px; letter-spacing: .25px; color: #fbe8d8; border-color: #4a5572; }

.tabs { height: 27.500px; flex: none; background: #e6e6e6; border-top: 1px solid #ababab; display: flex; color: #555; white-space: nowrap; }
.tabs > span { width: 37.520px; height: 20px; margin-top: 3px; line-height: 18px; text-align: center; border-right: 1px solid #999; letter-spacing: -.3px; flex: none; }
.nav { width: 98.800px; display: flex; align-items: center; padding-left: 25px; gap: 23px; flex: none; }
.nav svg { width: 5px; height: 8px; fill: #227e48; }
.nav b { margin-left: -2px; color: #227e48; }
.tabs .yel { background: linear-gradient(#ff0, #ff0) no-repeat 2px 0 / 32px 20px; color: #444; }
.tabs .last { border: 0; }
.tabs .act { background: #fff; height: 24px; margin-top: -1px; color: #227e48; font-weight: 700; border: 0; border-bottom: 2px solid #227e48; line-height: 26px; }
.tabs .t68 { width: 39px; }
.tabs .t2 { width: 57.600px; }
.tabs .t3 { width: 84.200px; }
.tabs .t4 { width: 44.500px; }
.more { margin-left: 20px; line-height: 24px; width: 25px; flex: none; }
.plus { width: 16px; height: 16px; margin: 5px 0 0; fill: none; stroke: #777; }
.tdots { width: 16px; margin: 4px 0 0 13px; height: 20px; justify-content: center; flex: none; }
.scroll { margin: 6px 0 0 8px; width: 100px; height: 15px; background: linear-gradient(#666, #666) no-repeat 14px 0 / 1.500px 15px, #fff; border: 1px solid #888; flex: none; }
.scroll svg { width: 15px; height: 8px; display: block; margin-top: 2.500px; fill: #444; }
.status { height: 21.500px; flex: none; display: flex; align-items: center; border-top: 1px solid #d0d0d0; font-size: 11px; letter-spacing: -.04px; color: #444; padding-bottom: 2px; }
.status svg { fill: none; stroke: #555; }
.mode { width: 60px; padding-left: 7px; }
.macro { margin-left: 7px; width: 16px; height: 14px; }
.acc { margin: 0 2px 0 16px; width: 16px; height: 14px; }
.access { width: 250px; }
.views { margin-left: auto; display: flex; align-items: center; width: 209px; gap: 27.500px; flex: none; }
.views svg { width: 12px; height: 12px; stroke: #999; }
.minus { width: 7px; height: 1px; background: #999; margin-left: -8px; flex: none; }
.zoomline { width: 90px; height: 1px; background: #333; margin-left: -22px; flex: none; }
.zoomline i { display: block; width: 1px; height: 5px; background: #333; margin: -2px 0 0 49px; }
```
